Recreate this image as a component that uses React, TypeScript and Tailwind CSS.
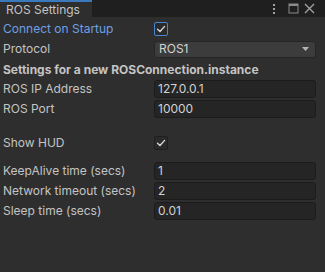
import React from 'react';

const font = { fontFamily: 'Inter, "Noto Sans", sans-serif' };

function Check({ focused }: { focused?: boolean }) {
  return (
    <div
      className={`flex h-[14px] w-[14px] items-center justify-center rounded-[2px] border bg-[#2a2a2a] ${
        focused ? 'border-[#4a86d0]' : 'border-[#1f1f1f]'
      }`}
    >
      <svg width="10" height="10" viewBox="0 0 10 10" fill="none">
        <path d="M1.5 5.2 L4 7.5 L8.6 2.4" stroke="#d6d6d6" strokeWidth="1.4" strokeLinecap="round" strokeLinejoin="round" />
      </svg>
    </div>
  );
}

function Row({ label, children, labelClass = 'text-[#c4c4c4]' }: { label: string; children: React.ReactNode; labelClass?: string }) {
  return (
    <div className="flex h-[18px] items-center">
      <div className={`w-[154px] shrink-0 pl-[3px] text-[12px] leading-none ${labelClass}`}>{label}</div>
      {children}
    </div>
  );
}

function Field({ value }: { value: string }) {
  return (
    <div className="flex h-[18px] w-[162px] items-center rounded-[3px] border border-[#1c1c1c] bg-[#252525] px-[3px] text-[12px] leading-none text-[#d2d2d2]">
      {value}
    </div>
  );
}

export default function App() {
  return (
    <div className="h-[272px] w-[325px] overflow-hidden bg-[#2e2e2e]" style={font}>
      <div className="flex h-[17px] items-stretch bg-[#1f1f1f]">
        <div className="flex w-[92px] items-center border-t-2 border-[#3a79bb] bg-[#2e2e2e] pl-[6px] text-[12px] leading-none text-[#c4c4c4]">
          ROS Settings
        </div>
        <div className="flex-1" />
        <div className="flex items-center pr-[10px]">
          <svg width="4" height="12" viewBox="0 0 4 12" className="mr-[12px]">
            <rect x="1" y="1" width="2" height="2" fill="#a0a0a0" />
            <rect x="1" y="5" width="2" height="2" fill="#a0a0a0" />
            <rect x="1" y="9" width="2" height="2" fill="#a0a0a0" />
          </svg>
          <svg width="11" height="11" viewBox="0 0 11 11" fill="none" className="mr-[5px]">
            <rect x="1" y="1" width="9" height="9" stroke="#8a8a8a" strokeWidth="1" />
            <rect x="1" y="1" width="9" height="2" fill="#8a8a8a" />
          </svg>
          <svg width="11" height="11" viewBox="0 0 11 11" fill="none">
            <path d="M1 1 L10 10 M10 1 L1 10" stroke="#a0a0a0" strokeWidth="1.4" />
          </svg>
        </div>
      </div>

      <div className="pt-[3px]">
        <Row label="Connect on Startup" labelClass="text-[#6e9fe6]">
          <Check focused />
        </Row>
        <div className="mt-[2px] flex h-[18px] items-center">
          <div className="w-[154px] shrink-0 pl-[3px] text-[12px] leading-none text-[#c4c4c4]">Protocol</div>
          <div className="flex h-[17px] w-[162px] items-center justify-between rounded-[3px] border border-[#262626] bg-[#3c3c3c] pl-[4px] pr-[6px] text-[12px] leading-none text-[#d2d2d2]">
            <span>ROS1</span>
            <svg width="7" height="4" viewBox="0 0 7 4">
              <path d="M0 0 H7 L3.5 4 Z" fill="#b4b4b4" />
            </svg>
          </div>
        </div>
        <div className="mt-[3px] flex h-[18px] items-center pl-[3px] text-[12px] font-bold leading-none text-[#c4c4c4]">
          Settings for a new ROSConnection.instance
        </div>
        <div className="mt-[1px] flex flex-col gap-[2px]">
          <Row label="ROS IP Address">
            <Field value="127.0.0.1" />
          </Row>
          <Row label="ROS Port">
            <Field value="10000" />
          </Row>
        </div>
        <div className="mt-[16px]">
          <Row label="Show HUD">
            <Check />
          </Row>
        </div>
        <div className="mt-[10px] flex flex-col gap-[2px]">
          <Row label="KeepAlive time (secs)">
            <Field value="1" />
          </Row>
          <Row label="Network timeout (secs)">
            <Field value="2" />
          </Row>
          <Row label="Sleep time (secs)">
            <Field value="0.01" />
          </Row>
        </div>
      </div>
    </div>
  );
}
